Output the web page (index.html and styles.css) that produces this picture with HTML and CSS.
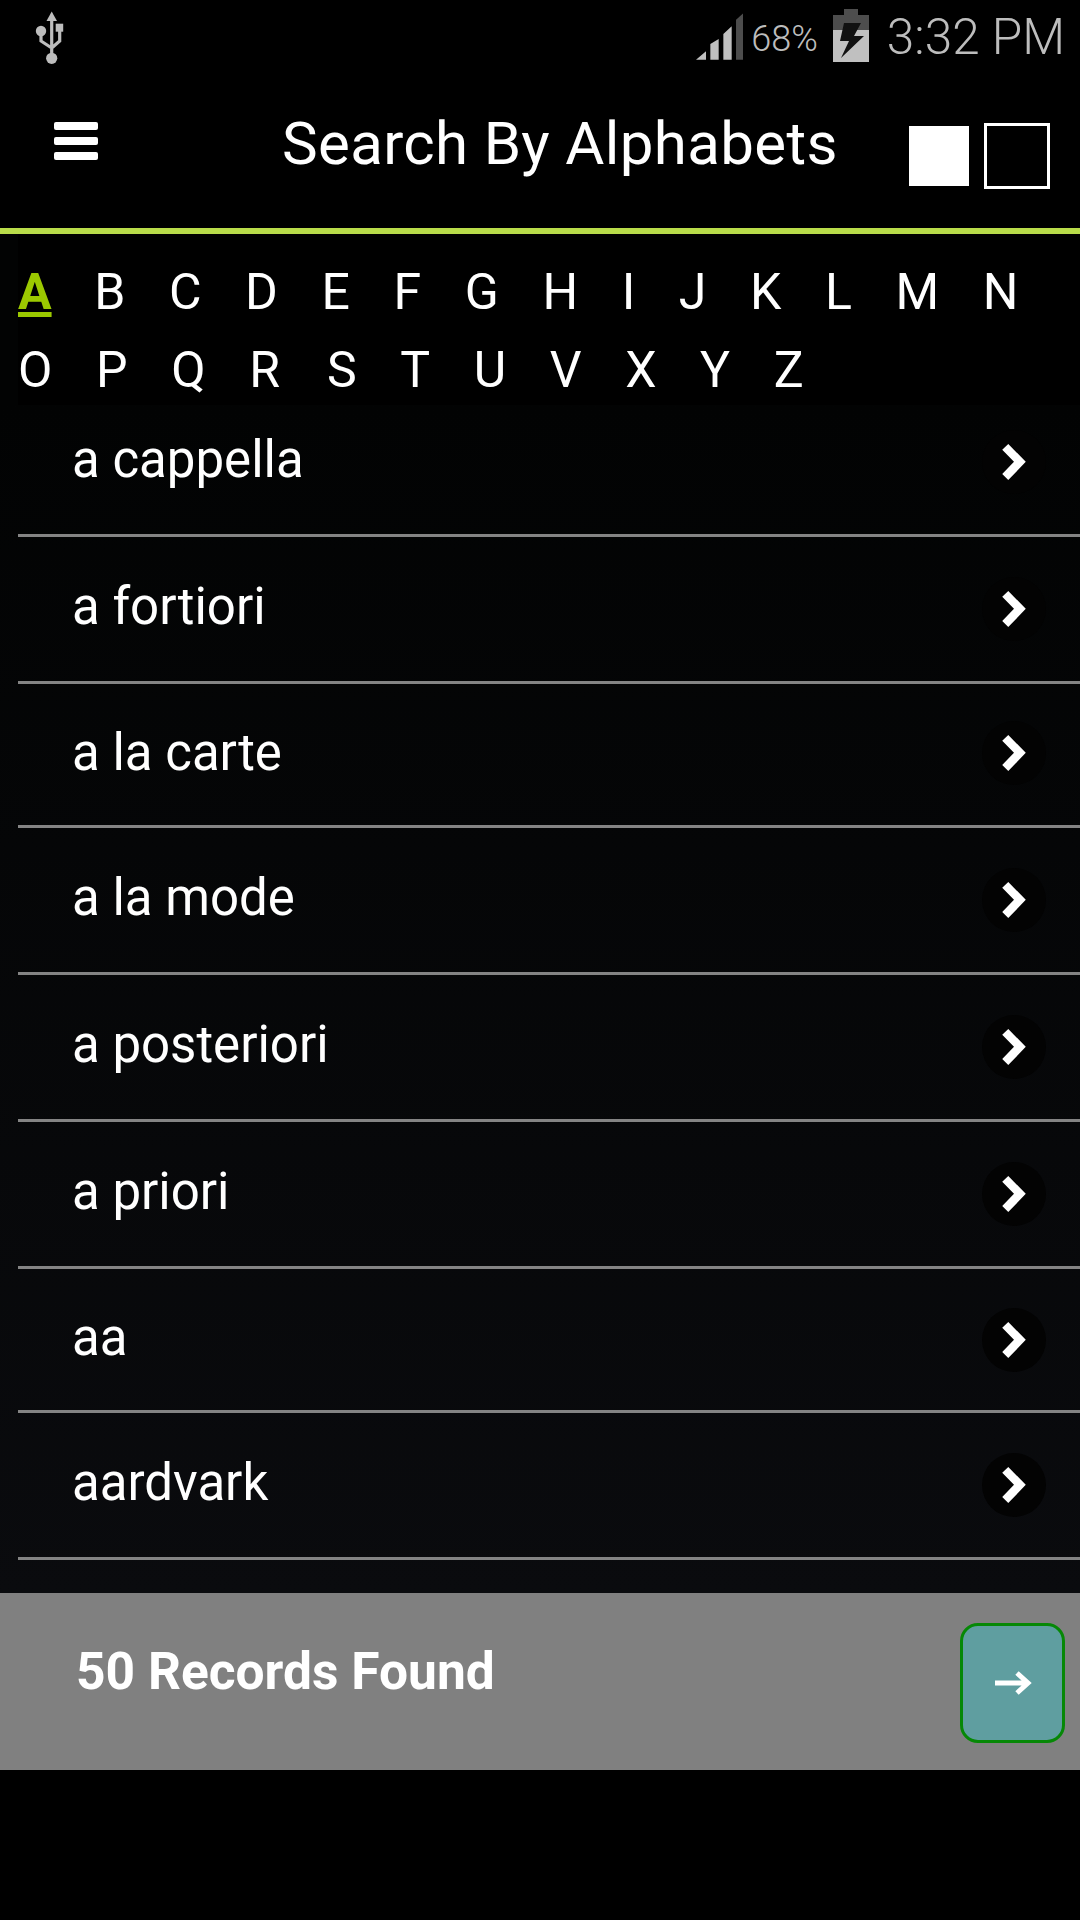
FILE: index.html
```html
<!DOCTYPE html>
<html lang="en">
<head>
<meta charset="utf-8">
<title>Search By Alphabets</title>
<link rel="stylesheet" href="styles.css">
</head>
<body>
<div class="status">
  <svg class="usb" viewBox="0 0 60 65" aria-hidden="true">
    <path d="M30.7 6.5 L25.5 16 H36 Z" fill="#bdbdbd"/>
    <path d="M30.7 14 V50 M20 26 V36 L30.7 43 M38.7 26 V36 L30.7 43" fill="none" stroke="#bdbdbd" stroke-width="3.2"/>
    <circle cx="20" cy="26" r="5.2" fill="#bdbdbd"/>
    <rect x="34.7" y="18.7" width="7.5" height="8" fill="#bdbdbd"/>
    <circle cx="30.7" cy="53.3" r="5.6" fill="#bdbdbd"/>
  </svg>
  <div class="status-right">
    <svg class="signal" viewBox="15 25 143 140" aria-hidden="true">
      <path d="M15 165 L45 140 V165 Z M58 165 V118 L83 103 V165 Z M97 165 V88 L122 65 V165 Z" fill="#c0c0c0"/>
      <path d="M135 165 V45 L158 25 V165 Z" fill="#4d4d4d"/>
    </svg>
    <span class="battery-text">68%</span>
    <svg class="battery" viewBox="0 0 36 53" aria-hidden="true">
      <rect x="11" y="0" width="14" height="7" fill="#4d4d4d"/>
      <rect x="0" y="6" width="36" height="15" fill="#4d4d4d"/>
      <rect x="0" y="21" width="36" height="32" fill="#c0c0c0"/>
      <path d="M11 14 H28 L21 27 H31 L8 49 L16 32 H7 Z" fill="#111"/>
    </svg>
    <span class="clock">3:32 PM</span>
  </div>
</div>

<header class="toolbar">
  <button class="menu" aria-label="Menu"><span></span><span></span><span></span></button>
  <h1 class="title">Search By Alphabets</h1>
  <span class="square square-filled"></span>
  <span class="square square-outline"></span>
</header>

<nav class="alphabet">
  <div class="letters">
    <a class="letter letter-active">A</a><a class="letter">B</a><a class="letter">C</a><a class="letter">D</a><a class="letter">E</a><a class="letter">F</a><a class="letter">G</a><a class="letter">H</a><a class="letter">I</a><a class="letter">J</a><a class="letter">K</a><a class="letter">L</a><a class="letter">M</a><a class="letter">N</a><a class="letter">O</a><a class="letter">P</a><a class="letter">Q</a><a class="letter letter-wide">R</a><a class="letter">S</a><a class="letter">T</a><a class="letter">U</a><a class="letter">V</a><a class="letter">X</a><a class="letter">Y</a><a class="letter">Z</a>
  </div>
</nav>

<ul class="list">
  <li class="row row-scrolled"><span class="word">a cappella</span><span class="go"><svg viewBox="0 0 70 107" aria-hidden="true"><path d="M0 17 L18 0 L70 53 L18 107 L0 89 L35 53 Z" fill="#fff"/></svg></span></li>
  <li class="row"><span class="word">a fortiori</span><span class="go"><svg viewBox="0 0 70 107" aria-hidden="true"><path d="M0 17 L18 0 L70 53 L18 107 L0 89 L35 53 Z" fill="#fff"/></svg></span></li>
  <li class="row row-short row-raised"><span class="word">a la carte</span><span class="go"><svg viewBox="0 0 70 107" aria-hidden="true"><path d="M0 17 L18 0 L70 53 L18 107 L0 89 L35 53 Z" fill="#fff"/></svg></span></li>
  <li class="row"><span class="word">a la mode</span><span class="go"><svg viewBox="0 0 70 107" aria-hidden="true"><path d="M0 17 L18 0 L70 53 L18 107 L0 89 L35 53 Z" fill="#fff"/></svg></span></li>
  <li class="row"><span class="word">a posteriori</span><span class="go"><svg viewBox="0 0 70 107" aria-hidden="true"><path d="M0 17 L18 0 L70 53 L18 107 L0 89 L35 53 Z" fill="#fff"/></svg></span></li>
  <li class="row"><span class="word">a priori</span><span class="go"><svg viewBox="0 0 70 107" aria-hidden="true"><path d="M0 17 L18 0 L70 53 L18 107 L0 89 L35 53 Z" fill="#fff"/></svg></span></li>
  <li class="row row-short"><span class="word">aa</span><span class="go"><svg viewBox="0 0 70 107" aria-hidden="true"><path d="M0 17 L18 0 L70 53 L18 107 L0 89 L35 53 Z" fill="#fff"/></svg></span></li>
  <li class="row"><span class="word">aardvark</span><span class="go"><svg viewBox="0 0 70 107" aria-hidden="true"><path d="M0 17 L18 0 L70 53 L18 107 L0 89 L35 53 Z" fill="#fff"/></svg></span></li>
</ul>

<footer class="records">
  <span class="records-text">50 Records Found</span>
  <button class="next" aria-label="Next">
    <svg viewBox="0 0 38 26" aria-hidden="true"><path d="M1 13 H34 M23 3 L34 13 L23 23" fill="none" stroke="#fff" stroke-width="5"/></svg>
  </button>
</footer>
</body>
</html>
```

FILE: styles.css
```css
* { box-sizing: border-box; }
html, body { margin: 0; padding: 0; }
body {
  width: 1080px;
  height: 1920px;
  background: #000;
  color: #fff;
  font-family: Roboto, "Noto Sans", sans-serif;
  overflow: hidden;
}

.status {
  height: 76px;
  display: flex;
  align-items: flex-start;
  justify-content: space-between;
  padding-right: 15px;
  color: #bdbdbd;
}
.usb { width: 60px; height: 65px; margin: 5px 0 0 21px; }
.status-right { display: flex; align-items: flex-start; }
.signal { width: 47.7px; height: 46.7px; margin-top: 13px; }
.battery-text {
  font-size: 36px;
  font-weight: 300;
  line-height: 42px;
  margin: 18px 0 0 8px;
}
.battery { width: 36px; height: 53px; margin: 9px 0 0 15px; }
.clock {
  font-size: 49.5px;
  font-weight: 300;
  line-height: 56px;
  margin: 9px 0 0 18px;
}

.toolbar {
  height: 158px;
  border-bottom: 6px solid #b9dc4a;
  display: flex;
  align-items: flex-start;
}
.menu {
  width: 44px;
  height: 38px;
  margin: 46px 0 0 54px;
  padding: 0;
  background: none;
  border: 0;
  display: flex;
  flex-direction: column;
  justify-content: space-between;
}
.menu span { display: block; height: 8px; border-radius: 2px; background: #fff; }
.title {
  margin: 33px 0 0 184px;
  width: 627px;
  font-size: 60px;
  font-weight: 400;
  letter-spacing: 0.35px;
  line-height: 70px;
  white-space: nowrap;
}
.square { display: block; flex: none; }
.square-filled { width: 60px; height: 60px; background: #fff; margin-top: 50px; }
.square-outline { width: 66px; height: 66px; border: 3px solid #fff; margin: 47px 0 0 15px; }

.alphabet {
  height: 171px;
  padding-left: 18px;
  background: #020303;
}
.letters {
  height: 100%;
  background: #000;
  padding-top: 19px;
  display: flex;
  flex-wrap: wrap;
  align-content: flex-start;
}
.letter {
  font-size: 50px;
  line-height: 78px;
  margin-right: 43.6px;
}
.letter-wide { margin-right: 47px; }
.letter-active {
  color: #9bc800;
  font-weight: 700;
  text-decoration: underline;
  margin-right: 42.6px;
}

.list {
  list-style: none;
  margin: 0;
  padding: 0;
  height: 1188px;
  overflow: hidden;
  background: linear-gradient(#020303, #0a0b0e);
}
.row {
  height: 147px;
  margin-left: 18px;
  border-bottom: 3px solid #848484;
  display: flex;
  align-items: center;
  justify-content: space-between;
  padding: 0 34px 0 54px;
}
.row-scrolled { margin-top: -15px; }
.row-short { height: 144px; }
.word { font-size: 51px; line-height: 60px; margin-bottom: 4px; }
.row-raised .word { margin-bottom: 3px; }
.row-raised .go { margin-bottom: 4px; }
.go {
  width: 64px;
  height: 64px;
  border-radius: 50%;
  background: #030303;
  display: flex;
  align-items: center;
  justify-content: center;
}
.go svg { width: 24px; height: 36px; display: block; }

.records {
  height: 177px;
  background: #808080;
  display: flex;
  align-items: flex-start;
  justify-content: space-between;
  padding: 30px 15px 0 76px;
}
.records-text {
  font-size: 51.5px;
  font-weight: 700;
  line-height: 60px;
  margin-top: 19px;
}
.next {
  width: 105px;
  height: 120px;
  padding: 0;
  border: 3px solid #068806;
  border-radius: 18px;
  background: #5f9ea0;
  display: flex;
  align-items: center;
  justify-content: center;
}
.next svg { width: 38px; height: 26px; display: block; }
```
